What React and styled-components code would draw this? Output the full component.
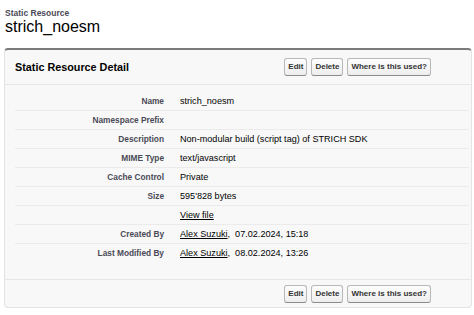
import React from "react";
import styled, { createGlobalStyle } from "styled-components";

const Global = createGlobalStyle`
  html, body { margin: 0; padding: 0; background: #fff; }
  body { font-family: "Liberation Sans", Arial, sans-serif; color: #000; }
`;

const Page = styled.div`
  padding: 8px 2px 0 4px;
`;

const TitleBlock = styled.div`
  padding-left: 1px;
  margin-bottom: 12px;
`;

const Kicker = styled.div`
  font-size: 8.5px;
  font-weight: bold;
  color: #4a4a56;
  line-height: 10px;
`;

const Title = styled.h1`
  margin: 0;
  font-size: 16px;
  font-weight: normal;
  line-height: 18px;
  color: #000;
`;

const Panel = styled.div`
  background: #f8f8f8;
  border: 1px solid #e4e4e4;
  border-top: 2px solid #7b7b7b;
  border-radius: 4px;
`;

const Bar = styled.div`
  display: flex;
  align-items: center;
  height: ${(p) => (p.$bottom ? "27px" : "34px")};
  padding: 0 40px 0 10px;
  border-${(p) => (p.$bottom ? "top" : "bottom")}: 1px solid #e6e6e6;
`;

const BarTitle = styled.h2`
  flex: 1;
  margin: 0;
  font-size: 10.8px;
  font-weight: bold;
  color: #000;
`;

const Buttons = styled.div`
  display: flex;
  gap: 4px;
`;

const Button = styled.button`
  font-family: "Liberation Sans", Arial, sans-serif;
  font-size: 8px;
  font-weight: bold;
  color: #333;
  background: linear-gradient(#fdfdfd, #eeeeee);
  border: 1px solid #b8b8b8;
  border-bottom-color: #8a8a8a;
  border-radius: 3px;
  height: 18px;
  padding: 0 3px;
  line-height: 16px;
`;

const Rows = styled.div`
  padding: 7px 0 17px 0;
`;

const Row = styled.div`
  display: grid;
  grid-template-columns: 149px 1fr;
  column-gap: 16px;
  align-items: center;
  height: 18px;
  margin: 0 2px 0 10px;
  border-bottom: ${(p) => (p.$last ? "none" : "1px solid #ebebeb")};
`;

const Label = styled.div`
  text-align: right;
  font-size: 8.3px;
  font-weight: bold;
  color: #4a4a56;
`;

const Value = styled.div`
  font-size: 9.1px;
  color: #000;
`;

const Link = styled.a`
  color: #000;
  text-decoration: underline;
`;

const rows = [
  { label: "Name", value: "strich_noesm" },
  { label: "Namespace Prefix", value: "" },
  { label: "Description", value: "Non-modular build (script tag) of STRICH SDK" },
  { label: "MIME Type", value: "text/javascript" },
  { label: "Cache Control", value: "Private" },
  { label: "Size", value: "595'828 bytes" },
  { label: "", value: <Link>View file</Link> },
  { label: "Created By", value: <><Link>Alex Suzuki</Link>,&nbsp; 07.02.2024, 15:18</> },
  { label: "Last Modified By", value: <><Link>Alex Suzuki</Link>,&nbsp; 08.02.2024, 13:26</> },
];

const Actions = () => (
  <Buttons>
    <Button>Edit</Button>
    <Button>Delete</Button>
    <Button>Where is this used?</Button>
  </Buttons>
);

export default function App() {
  return (
    <>
      <Global />
      <Page>
        <TitleBlock>
          <Kicker>Static Resource</Kicker>
          <Title>strich_noesm</Title>
        </TitleBlock>
        <Panel>
          <Bar>
            <BarTitle>Static Resource Detail</BarTitle>
            <Actions />
          </Bar>
          <Rows>
            {rows.map((r, i) => (
              <Row key={i} $last={i === rows.length - 1}>
                <Label>{r.label}</Label>
                <Value>{r.value}</Value>
              </Row>
            ))}
          </Rows>
          <Bar $bottom>
            <BarTitle />
            <Actions />
          </Bar>
        </Panel>
      </Page>
    </>
  );
}
